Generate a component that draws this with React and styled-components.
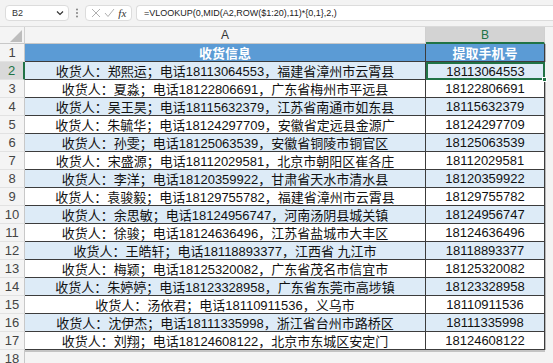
import React from 'react';
import styled, { createGlobalStyle } from 'styled-components';

const GlobalStyle = createGlobalStyle`
  body {
    margin: 0;
    background: #f4f4f4;
    font-family: "Liberation Sans", "Noto Sans CJK SC", sans-serif;
  }
`;

const Page = styled.div`
  width: 553px;
  height: 363px;
  overflow: hidden;
  background: #f4f4f4;
`;

const FormulaBar = styled.div`
  height: 27px;
  display: flex;
  align-items: center;
  gap: 4px;
  padding-left: 5px;
  background: #f3f3f3;
  border-bottom: 1px solid #dadada;
  box-sizing: border-box;
`;

const NameBox = styled.div`
  width: 64px;
  height: 16px;
  box-sizing: border-box;
  background: #fff;
  border: 1px solid #dcdcdc;
  border-radius: 4px;
  display: flex;
  align-items: center;
  justify-content: space-between;
  padding: 0 4px 0 6px;
  font-size: 9px;
  color: #333;
`;

const Dots = styled.svg`
  width: 6px;
  height: 12px;
  margin: 0 1px;
`;

const FxBox = styled.div`
  width: 47px;
  height: 16px;
  box-sizing: border-box;
  background: #fff;
  border: 1px solid #dcdcdc;
  border-radius: 4px;
  display: flex;
  align-items: center;
  justify-content: space-around;
  padding: 0 3px;
`;

const Fx = styled.span`
  font-family: "Liberation Serif", serif;
  font-style: italic;
  font-size: 11px;
  color: #333;
`;

const FormulaInput = styled.div`
  flex: 1;
  height: 16px;
  box-sizing: border-box;
  background: #fff;
  border: 1px solid #dcdcdc;
  border-right: none;
  border-radius: 4px 0 0 4px;
  display: flex;
  align-items: center;
  padding-left: 7px;
  font-size: 9px;
  color: #222;
  white-space: nowrap;
`;

const Sheet = styled.div`
  display: grid;
  grid-template-columns: 25px 401px 119px 1fr;
  grid-template-rows: 17px repeat(18, 18px);
`;

const Corner = styled.div`
  background: #f4f4f4;
  border-right: 1px solid #d0d0d0;
  border-bottom: 1px solid #c8c8c8;
  box-sizing: border-box;
  display: flex;
  align-items: flex-end;
  justify-content: flex-end;
  padding: 0 2px 1px 0;
`;

const Triangle = styled.div`
  width: 0;
  height: 0;
  border-left: 12px solid transparent;
  border-bottom: 12px solid #bdbdbd;
`;

const ColHead = styled.div`
  background: ${(p) => (p.$active ? '#d3d3d3' : '#f4f4f4')};
  color: ${(p) => (p.$active ? '#217346' : '#333')};
  border-right: 1px solid #d0d0d0;
  border-bottom: ${(p) => (p.$active ? '2px solid #217346' : '1px solid #c8c8c8')};
  box-sizing: border-box;
  display: flex;
  align-items: center;
  justify-content: center;
  font-size: 12px;
`;

const Filler = styled.div`
  background: #f4f4f4;
`;

const RowHead = styled.div`
  background: ${(p) => (p.$active ? '#d9d9d9' : '#f4f4f4')};
  color: ${(p) => (p.$active ? '#217346' : '#444')};
  border-right: ${(p) => (p.$active ? '2px solid #217346' : '1px solid #c8c8c8')};
  border-bottom: 1px solid #e2e2e2;
  box-sizing: border-box;
  display: flex;
  align-items: center;
  justify-content: center;
  font-size: 13px;
`;

const Cell = styled.div`
  position: relative;
  background: ${(p) => (p.$head ? '#5b9bd5' : p.$band ? '#ddebf7' : '#fff')};
  color: ${(p) => (p.$head ? '#fff' : '#111')};
  font-weight: ${(p) => (p.$head ? 700 : 400)};
  border-right: 1px solid #3c3c3c;
  border-bottom: 1px solid #3c3c3c;
  box-shadow: ${(p) => (p.$edge ? '1px 0 0 #b8b8b8' : 'none')};
  box-sizing: border-box;
  display: flex;
  align-items: center;
  justify-content: center;
  font-size: 13px;
  white-space: nowrap;
  overflow: hidden;
`;

const Selected = styled(Cell)`
  overflow: visible;
  border: 2px solid #217346;
  z-index: 1;
  &::after {
    content: '';
    position: absolute;
    right: -4px;
    bottom: -4px;
    width: 5px;
    height: 5px;
    background: #217346;
    border: 1px solid #fff;
    box-sizing: border-box;
  }
`;

const BottomShade = styled.div`
  grid-column: 2 / 4;
  height: 2px;
  background: #c4c4c4;
  align-self: start;
`;

const data = [
  ['郑熙运', '18113064553', '福建省漳州市云霄县'],
  ['夏淼', '18122806691', '广东省梅州市平远县'],
  ['吴王昊', '18115632379', '江苏省南通市如东县'],
  ['朱毓华', '18124297709', '安徽省定远县金源广'],
  ['孙雯', '18125063539', '安徽省铜陵市铜官区'],
  ['宋盛源', '18112029581', '北京市朝阳区崔各庄'],
  ['李洋', '18120359922', '甘肃省天水市清水县'],
  ['袁骏毅', '18129755782', '福建省漳州市云霄县'],
  ['余思敏', '18124956747', '河南汤阴县城关镇'],
  ['徐骏', '18124636496', '江苏省盐城市大丰区'],
  ['王皓轩', '18118893377', '江西省 九江市'],
  ['梅颖', '18125320082', '广东省茂名市信宜市'],
  ['朱婷婷', '18123328958', '广东省东莞市高埗镇'],
  ['汤依君', '18110911536', '义乌市'],
  ['沈伊杰', '18111335998', '浙江省台州市路桥区'],
  ['刘翔', '18124608122', '北京市东城区安定门'],
];

const Chevron = () => (
  <svg width="8" height="6" viewBox="0 0 8 6">
    <path d="M1 1.5 L4 4.5 L7 1.5" fill="none" stroke="#333" strokeWidth="1.2" />
  </svg>
);

const Cross = () => (
  <svg width="10" height="10" viewBox="0 0 10 10">
    <path d="M1 1 L9 9 M9 1 L1 9" stroke="#b0b0b0" strokeWidth="1" />
  </svg>
);

const Check = () => (
  <svg width="11" height="10" viewBox="0 0 11 10">
    <path d="M1 5 L4 8.5 L10 1" fill="none" stroke="#b0b0b0" strokeWidth="1" />
  </svg>
);

export default function App() {
  return (
    <Page>
      <GlobalStyle />
      <FormulaBar>
        <NameBox>
          B2
          <Chevron />
        </NameBox>
        <Dots viewBox="0 0 6 12">
          <circle cx="3" cy="2.5" r="0.9" fill="#777" />
          <circle cx="3" cy="6" r="0.9" fill="#777" />
          <circle cx="3" cy="9.5" r="0.9" fill="#777" />
        </Dots>
        <FxBox>
          <Cross />
          <Check />
          <Fx>fx</Fx>
        </FxBox>
        <FormulaInput>=VLOOKUP(0,MID(A2,ROW($1:20),11)*{'{'}0,1{'}'},2,)</FormulaInput>
      </FormulaBar>
      <Sheet>
        <Corner>
          <Triangle />
        </Corner>
        <ColHead>A</ColHead>
        <ColHead $active>B</ColHead>
        <Filler />

        <RowHead>1</RowHead>
        <Cell $head>收货信息</Cell>
        <Cell $head $edge>提取手机号</Cell>
        <Filler />

        {data.map(([name, phone, addr], i) => {
          const row = i + 2;
          const band = row % 2 === 0;
          return (
            <React.Fragment key={row}>
              <RowHead $active={row === 2}>{row}</RowHead>
              <Cell $band={band}>{`收货人：${name}；电话${phone}，${addr}`}</Cell>
              {row === 2 ? (
                <Selected $band={band}>{phone}</Selected>
              ) : (
                <Cell $band={band} $edge>{phone}</Cell>
              )}
              <Filler />
            </React.Fragment>
          );
        })}

        <RowHead>18</RowHead>
        <BottomShade />
        <Filler />
      </Sheet>
    </Page>
  );
}
